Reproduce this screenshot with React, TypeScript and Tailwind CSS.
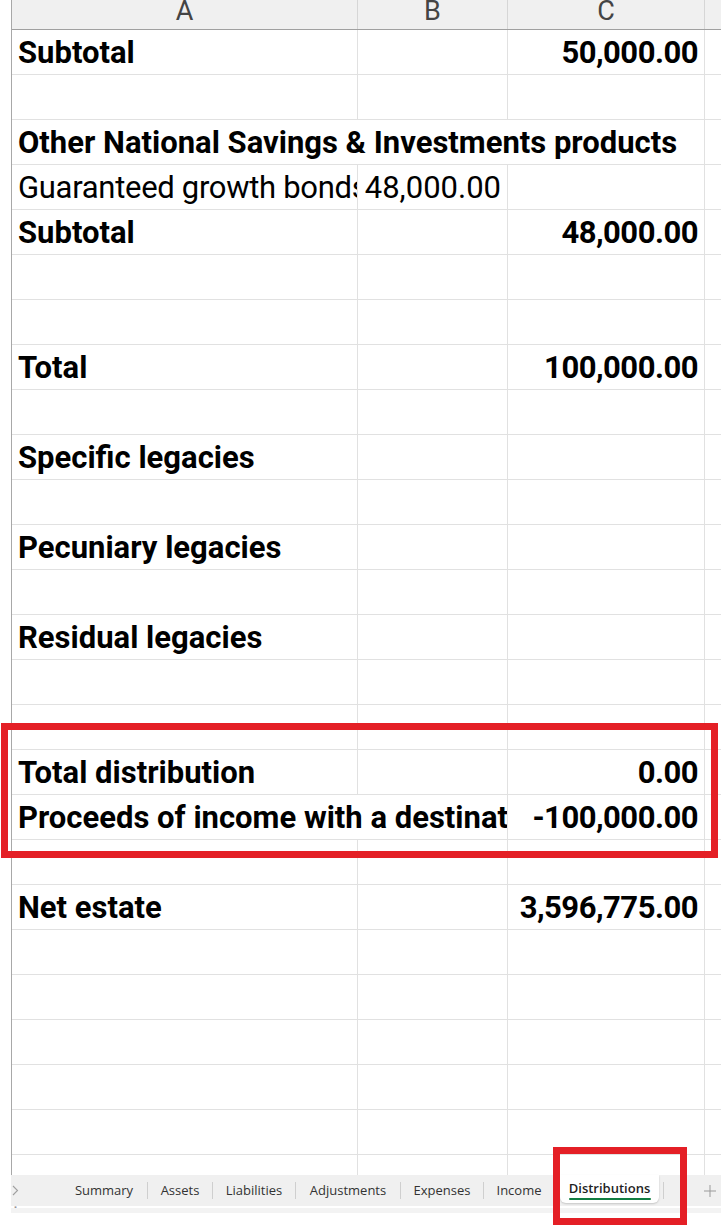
import React from "react";

type Row = {
  a?: string;
  b?: string;
  c?: string;
  bold?: boolean;
  span?: 0 | 2 | 3;
};

const rows: Row[] = [
  { a: "Subtotal", c: "50,000.00", bold: true },
  {},
  { a: "Other National Savings & Investments products", bold: true, span: 3 },
  { a: "Guaranteed growth bonds", b: "48,000.00", bold: false },
  { a: "Subtotal", c: "48,000.00", bold: true },
  {},
  {},
  { a: "Total", c: "100,000.00", bold: true },
  {},
  { a: "Specific legacies", bold: true },
  {},
  { a: "Pecuniary legacies", bold: true },
  {},
  { a: "Residual legacies", bold: true },
  {},
  {},
  { a: "Total distribution", c: "0.00", bold: true },
  { a: "Proceeds of income with a destination", c: "-100,000.00", bold: true, span: 2 },
  {},
  { a: "Net estate", c: "3,596,775.00", bold: true },
  {},
  {},
  {},
  {},
  {},
];

function SheetRow({ r }: { r: Row }) {
  const weight = r.bold === false ? "font-normal tracking-[-0.3px]" : "font-bold";
  if (r.span === 3) {
    return (
      <div className="flex h-[45px] border-b border-[#e1e1e1]">
        <div className={"w-[693px] shrink-0 border-r border-[#e1e1e1] pl-[6px] pt-[1px] overflow-hidden whitespace-nowrap leading-[44px] text-[31px] text-black " + weight}>
          {r.a}
        </div>
        <div className="flex-1" />
      </div>
    );
  }
  if (r.span === 2) {
    return (
      <div className="flex h-[45px] border-b border-[#e1e1e1]">
        <div className={"w-[496px] shrink-0 border-r border-[#e1e1e1] pl-[6px] pt-[1px] overflow-hidden whitespace-nowrap leading-[44px] text-[31px] text-black " + weight}>
          {r.a}
        </div>
        <div className="w-[197px] shrink-0 border-r border-[#e1e1e1] pr-[6px] pt-[1px] text-right overflow-hidden whitespace-nowrap leading-[44px] text-[31px] text-black font-bold tracking-[-0.5px]">
          {r.c}
        </div>
        <div className="flex-1" />
      </div>
    );
  }
  return (
    <div className="flex h-[45px] border-b border-[#e1e1e1]">
      <div className={"w-[346px] shrink-0 border-r border-[#e1e1e1] pl-[6px] pt-[1px] overflow-hidden whitespace-nowrap leading-[44px] text-[31px] text-black " + weight}>
        {r.a}
      </div>
      <div className="w-[150px] shrink-0 border-r border-[#e1e1e1] pr-[6px] pt-[1px] text-right overflow-hidden whitespace-nowrap leading-[44px] text-[31px] text-black font-normal">
        {r.b}
      </div>
      <div className="w-[197px] shrink-0 border-r border-[#e1e1e1] pr-[6px] pt-[1px] text-right overflow-hidden whitespace-nowrap leading-[44px] text-[31px] text-black font-bold tracking-[-0.5px]">
        {r.c}
      </div>
      <div className="flex-1" />
    </div>
  );
}

function Sep() {
  return <div className="w-px h-[17px] bg-[#cfcfcf] shrink-0" />;
}

function Tab({ label, w }: { label: string; w: string }) {
  return (
    <div className={"shrink-0 flex items-center justify-center h-full text-[13px] text-[#333] " + w}>
      {label}
    </div>
  );
}

export default function App() {
  return (
    <div className="relative w-[721px] h-[1227px] bg-white overflow-hidden font-['Roboto',sans-serif]">
      <div className="ml-[11px] border-l border-[#a8a8a8]">
        {/* Header */}
        <div className="flex h-[30px] bg-[#f0f0f0] border-b border-[#a0a0a0]">
          <div className="w-[346px] shrink-0 border-r border-[#d6d6d6] text-center text-[27px] leading-[22px] text-[#444]">A</div>
          <div className="w-[150px] shrink-0 border-r border-[#d6d6d6] text-center text-[27px] leading-[22px] text-[#444]">B</div>
          <div className="w-[197px] shrink-0 border-r border-[#d6d6d6] text-center text-[27px] leading-[22px] text-[#444]">C</div>
          <div className="flex-1" />
        </div>
        {rows.map((r, i) => (
          <SheetRow key={i} r={r} />
        ))}
        <div className="flex h-[20px]">
          <div className="w-[346px] shrink-0 border-r border-[#e1e1e1]" />
          <div className="w-[150px] shrink-0 border-r border-[#e1e1e1]" />
          <div className="w-[197px] shrink-0 border-r border-[#e1e1e1]" />
          <div className="flex-1" />
        </div>
      </div>

      {/* Sheet tabs */}
      <div className="ml-[11px] h-[31px] bg-[#f0f0f0] flex items-center font-['Open_Sans',sans-serif]">
        <div className="w-[50px] shrink-0 h-full flex items-center pl-[1px]">
          <svg width="7" height="11" viewBox="0 0 7 11" fill="none">
            <path d="M1 1l4.5 4.5L1 10" stroke="#a0a0a0" strokeWidth="1.1" />
          </svg>
        </div>
        <Tab label="Summary" w="w-[86px]" />
        <Sep />
        <Tab label="Assets" w="w-[64px]" />
        <Sep />
        <Tab label="Liabilities" w="w-[82px]" />
        <Sep />
        <Tab label="Adjustments" w="w-[104px]" />
        <Sep />
        <Tab label="Expenses" w="w-[82px]" />
        <Sep />
        <Tab label="Income" w="w-[70px]" />
        <div className="w-[6px] shrink-0" />
        <div className="w-[99px] shrink-0 self-start h-[28px] bg-white rounded-b-[6px] shadow-[0_1px_2px_rgba(0,0,0,0.18)] flex flex-col items-center pt-[5px]">
          <span className="text-[13px] font-semibold text-[#1f1f1f] leading-[17px]">Distributions</span>
          <span className="block w-[82px] h-[2px] bg-[#107c41] mt-[1px] rounded-full" />
        </div>
        <div className="w-[4px] shrink-0" />
        <Sep />
        <div className="flex-1" />
        <div className="mr-[5px] w-[12px] h-[12px] flex items-center justify-center">
          <svg width="12" height="12" viewBox="0 0 12 12" fill="none">
            <path d="M6 0v12M0 6h12" stroke="#9a9a9a" strokeWidth="1" />
          </svg>
        </div>
      </div>
      <div className="ml-[11px] mt-[2px] h-[5px] bg-[#f3f3f3] relative">
        <span className="absolute left-[3px] top-[-3px] text-[8px] leading-[8px] text-[#555]">°</span>
      </div>

      {/* Red annotation boxes */}
      <div className="absolute left-[1px] top-[723px] w-[717px] h-[135px] border-[7px] border-[#e41f26] pointer-events-none" />
      <div className="absolute left-[553px] top-[1147px] w-[134px] h-[78px] border-[7px] border-[#e41f26] pointer-events-none" />
    </div>
  );
}
